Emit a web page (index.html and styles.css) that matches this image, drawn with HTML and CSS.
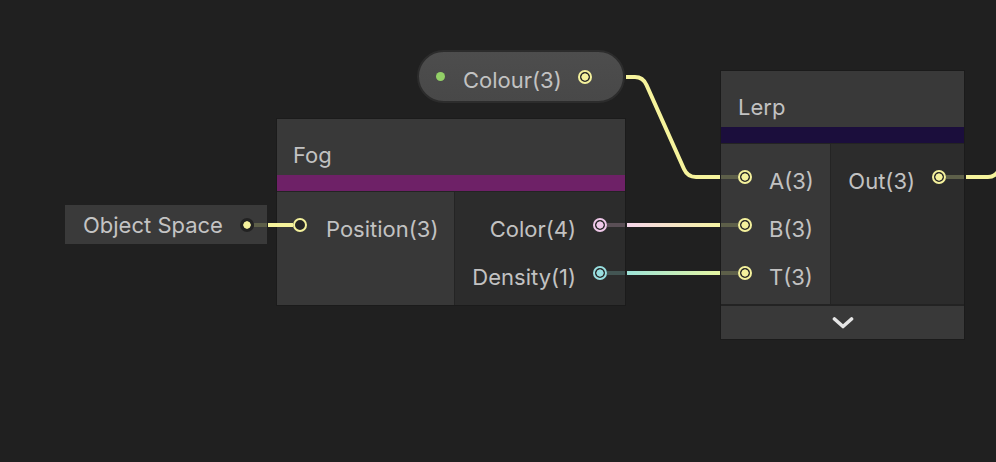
FILE: index.html
```html
<!DOCTYPE html>
<html>
<head>
<meta charset="utf-8">
<link rel="stylesheet" href="styles.css">
</head>
<body>
<div class="canvas">
  <div class="prop-node">
    <span class="prop-label">Object Space</span>
    <span class="prop-port"></span>
    <span class="stub stub-olive stub-prop"></span>
  </div>

  <div class="pill">
    <span class="pill-dot"></span>
    <span class="label pill-label">Colour(3)</span>
    <span class="port port-yellow pill-port"></span>
  </div>

  <div class="node fog">
    <div class="node-title">Fog</div>
    <div class="bar bar-fog"></div>
    <div class="node-body">
      <div class="col col-in">
        <div class="row">
          <span class="stub stub-none"></span>
          <span class="port port-hollow"></span>
          <span class="label label-in">Position(3)</span>
        </div>
      </div>
      <div class="col col-out">
        <div class="row row-out">
          <span class="label label-out">Color(4)</span>
          <span class="port port-pink"></span>
          <span class="stub stub-pink"></span>
        </div>
        <div class="row row-out">
          <span class="label label-out">Density(1)</span>
          <span class="port port-cyan"></span>
          <span class="stub stub-teal"></span>
        </div>
      </div>
    </div>
  </div>

  <div class="node lerp">
    <div class="node-title">Lerp</div>
    <div class="bar bar-lerp"></div>
    <div class="node-body">
      <div class="col col-in">
        <div class="row">
          <span class="stub stub-olive"></span>
          <span class="port port-yellow"></span>
          <span class="label label-in">A(3)</span>
        </div>
        <div class="row">
          <span class="stub stub-olive"></span>
          <span class="port port-yellow"></span>
          <span class="label label-in">B(3)</span>
        </div>
        <div class="row">
          <span class="stub stub-olive"></span>
          <span class="port port-yellow"></span>
          <span class="label label-in">T(3)</span>
        </div>
      </div>
      <div class="col col-out">
        <div class="row row-out">
          <span class="label label-out">Out(3)</span>
          <span class="port port-yellow"></span>
          <span class="stub stub-olive"></span>
        </div>
      </div>
    </div>
    <div class="node-footer">
      <svg class="chevron" width="22" height="13" viewBox="0 0 22 13">
        <polyline points="2.5,3 11,10.5 19.5,3" fill="none" stroke="#e6e6e6" stroke-width="3.6" stroke-linecap="round" stroke-linejoin="round"/>
      </svg>
    </div>
  </div>

  <svg class="wires" width="996" height="462" viewBox="0 0 996 462">
    <defs>
      <linearGradient id="gPink" gradientUnits="userSpaceOnUse" x1="627" y1="0" x2="720" y2="0">
        <stop offset="0" stop-color="#f6d6ea"/>
        <stop offset="1" stop-color="#f5f3a2"/>
      </linearGradient>
      <linearGradient id="gTeal" gradientUnits="userSpaceOnUse" x1="627" y1="0" x2="720" y2="0">
        <stop offset="0" stop-color="#9de3d8"/>
        <stop offset="1" stop-color="#e6f6a2"/>
      </linearGradient>
    </defs>
    <path d="M268 225 L293 225" stroke="#f6f39c" stroke-width="4" fill="none"/>
    <path d="M626 77 L635 77 Q643 77 646.5 85 L684 169 Q687.6 177 696 177 L720 177" stroke="#f6f39c" stroke-width="4" fill="none"/>
    <path d="M627 225 L720 225" stroke="url(#gPink)" stroke-width="4" fill="none"/>
    <path d="M627 273 L720 273" stroke="url(#gTeal)" stroke-width="4" fill="none"/>
    <path d="M966 177 L988 177 Q995 177 999 170" stroke="#f6f39c" stroke-width="4" fill="none"/>
  </svg>
</div>
</body>
</html>
```
FILE: styles.css
```css
* { box-sizing: border-box; }

body {
  margin: 0;
  background: #202020;
  font-family: Inter, "Noto Sans", sans-serif;
}

.canvas {
  position: relative;
  width: 996px;
  height: 462px;
  overflow: hidden;
  background: #202020;
}

/* ---------- generic node ---------- */
.node {
  position: absolute;
  display: flex;
  flex-direction: column;
  border: 1px solid #1b1b1b;
  background: #2c2c2c;
}

.fog { left: 276px; top: 118px; width: 350px; }
.lerp { left: 720px; top: 70px; width: 245px; }

.node-title {
  height: 56px;
  padding: 22px 16px 0;
  font-size: 22px;
  line-height: 28px;
  color: #c2c2c2;
  background: #393939;
}
.lerp .node-title { padding-left: 17px; }

.bar {
  height: 17px;
  border-bottom: 1px solid #232323;
}
.bar-fog { background: #6e2167; }
.bar-lerp { background: #1b0e3c; }

.node-body { display: flex; }
.fog .node-body { height: 113px; }
.lerp .node-body { height: 160px; }

.col { padding-top: 9px; }
.col-in {
  background: #383838;
  border-right: 1px solid #242424;
}
.fog .col-in { width: 178px; }
.lerp .col-in { width: 110px; }
.col-out {
  flex: 1;
  background: #2c2c2c;
}

.row {
  height: 48px;
  display: flex;
  align-items: center;
}
.row-out { justify-content: flex-end; }

.label {
  font-size: 22px;
  line-height: 28px;
  color: #c2c2c2;
  padding-top: 7px;
  white-space: nowrap;
}
.label-in { margin-left: 17px; }
.fog .label-in { margin-left: 19px; }
.label-out { margin-right: 17px; }

/* ---------- ports ---------- */
.port {
  flex: none;
  width: 14px;
  height: 14px;
  border-radius: 50%;
  border: 2px solid;
}
.port-yellow {
  border-color: #f4f19c;
  background: radial-gradient(circle, #f4f19c 0 3.3px, #262626 3.9px);
}
.port-pink {
  border-color: #efc8e9;
  background: radial-gradient(circle, #efc8e9 0 3.3px, #262626 3.9px);
}
.port-cyan {
  border-color: #98dfe0;
  background: radial-gradient(circle, #98dfe0 0 3.3px, #262626 3.9px);
}
.port-hollow {
  border-color: #f4f19c;
  background: #262626;
}

.stub { flex: none; height: 4px; }
.col-in .stub { width: 16px; }
.lerp .col-in .stub { width: 17px; }
.col-out .stub { width: 18px; }
.stub-none { background: transparent; }
.stub-olive { background: #5d5f49; }
.stub-pink { background: #5a4f56; }
.stub-teal { background: #435553; }

.node-footer {
  height: 35px;
  border-top: 2px solid #232323;
  background: #393939;
  display: flex;
  justify-content: center;
  align-items: center;
}
.chevron { display: block; margin-left: 1px; }

/* ---------- property node ---------- */
.prop-node {
  position: absolute;
  left: 65px;
  top: 205px;
  width: 202px;
  height: 39px;
  display: flex;
  align-items: center;
  padding-left: 18px;
  background: #3a3a3a;
}
.prop-label {
  flex: 1;
  font-size: 22px;
  line-height: 28px;
  color: #c4c4c4;
  white-space: nowrap;
}
.prop-port {
  flex: none;
  width: 14px;
  height: 14px;
  border-radius: 50%;
  background: radial-gradient(circle, #f4f19c 0 3.4px, #222222 4px);
}
.stub-prop { width: 13px; }

/* ---------- colour pill ---------- */
.pill {
  position: absolute;
  left: 417px;
  top: 50px;
  width: 208px;
  height: 53px;
  border: 2px solid #2c2c2c;
  border-radius: 27px;
  background: linear-gradient(180deg, #4d4d4d, #484848);
  display: flex;
  align-items: center;
  padding: 0 31px 0 17px;
}
.pill-dot {
  flex: none;
  width: 9px;
  height: 9px;
  border-radius: 50%;
  background: #93d067;
}
.pill-label { margin-left: 18px; }
.pill-port { margin-left: auto; }

/* ---------- wires ---------- */
.wires {
  position: absolute;
  left: 0;
  top: 0;
  pointer-events: none;
}
```
